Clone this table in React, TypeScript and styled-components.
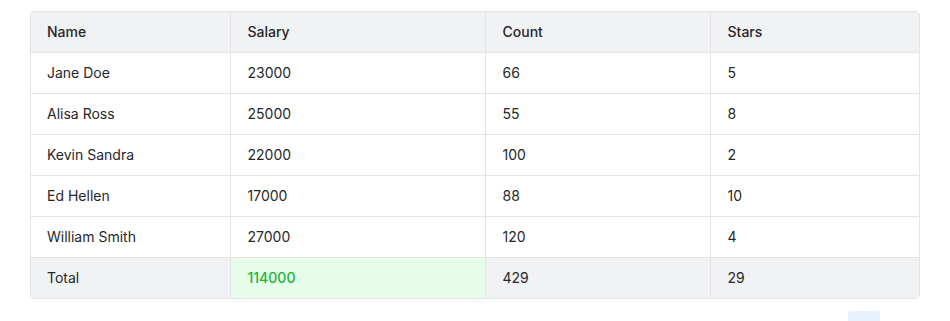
import React from "react"
import styled, { createGlobalStyle, css } from "styled-components"

interface Row {
    name: string;
    salary: number;
    count: number;
    stars: number;
}

const rows: Row[] = [
    { name: "Jane Doe", salary: 23000, count: 66, stars: 5 },
    { name: "Alisa Ross", salary: 25000, count: 55, stars: 8 },
    { name: "Kevin Sandra", salary: 22000, count: 100, stars: 2 },
    { name: "Ed Hellen", salary: 17000, count: 88, stars: 10 },
    { name: "William Smith", salary: 27000, count: 120, stars: 4 },
]

const Global = createGlobalStyle`
    body {
        margin:0;
        background:#ffffff;
        font-family:Inter, "Noto Sans", sans-serif;
        color:#27272a;
    }
`

const App = () => {
    const total = (key: "salary" | "count" | "stars") =>
        rows.reduce((sum, r) => sum + r[key], 0)
    return (
        <>
            <Global />
            <Page>
                <Frame>
                    <Table>
                        <colgroup>
                            <col style={{ width: 199 }} />
                            <col style={{ width: 255 }} />
                            <col style={{ width: 225 }} />
                            <col style={{ width: 209 }} />
                        </colgroup>
                        <thead>
                            <tr>
                                <Head>Name</Head>
                                <Head>Salary</Head>
                                <Head>Count</Head>
                                <Head>Stars</Head>
                            </tr>
                        </thead>
                        <tbody>
                            {rows.map((r) => (
                                <tr key={r.name}>
                                    <Cell>{r.name}</Cell>
                                    <Cell>{r.salary}</Cell>
                                    <Cell>{r.count}</Cell>
                                    <Cell>{r.stars}</Cell>
                                </tr>
                            ))}
                        </tbody>
                        <tfoot>
                            <tr>
                                <FootCell>Total</FootCell>
                                <FootCell $highlight>{total("salary")}</FootCell>
                                <FootCell>{total("count")}</FootCell>
                                <FootCell>{total("stars")}</FootCell>
                            </tr>
                        </tfoot>
                    </Table>
                </Frame>
                <Bottom>
                    <Tab />
                </Bottom>
            </Page>
        </>
    )
}

const cellBase = css`
    height:38px;
    padding:0 16px 2px 17px;
    border:1px solid #e4e4e7;
    &:first-child {
        padding-left:16px;
    }
`

const Page = styled.div`
    padding:11px 30px 0 30px;
    height:321px;
    box-sizing:border-box;
    overflow:hidden;
`
const Frame = styled.div`
    border:1px solid #e4e4e7;
    border-radius:4px;
    overflow:hidden;
`
const Table = styled.table`
    width:100%;
    table-layout:fixed;
    border-collapse:collapse;
    font-size:14px;
    border-style:hidden;
`
const Head = styled.th`
    ${cellBase}
    text-align:left;
    font-weight:500;
    color:#27272a;
    background:#f1f2f4;
`
const Cell = styled.td`
    ${cellBase}
    color:#27272a;
`
const FootCell = styled.td<{ $highlight?: boolean }>`
    ${cellBase}
    background:${(p) => (p.$highlight ? "#e6fde9" : "#f1f2f4")};
    color:${(p) => (p.$highlight ? "#1db33c" : "#27272a")};
    font-weight:${(p) => (p.$highlight ? 500 : 400)};
`
const Bottom = styled.div`
    display:flex;
    justify-content:flex-end;
    padding-right:40px;
    margin-top:12px;
`
const Tab = styled.div`
    width:32px;
    height:12px;
    background:#e8f1fe;
    border-radius:3px 3px 0 0;
`
export default App
